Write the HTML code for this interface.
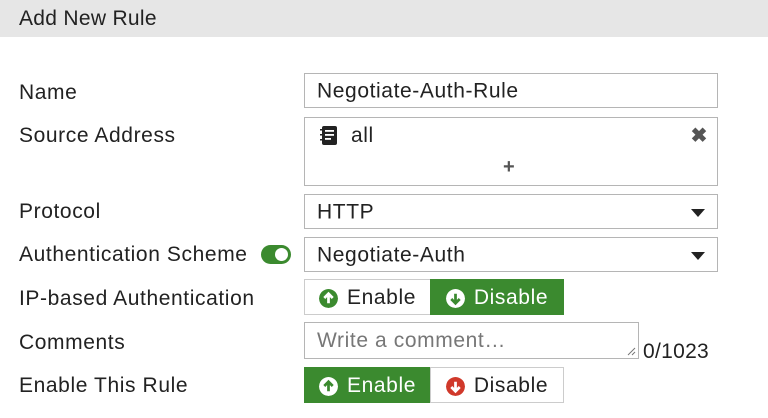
<!DOCTYPE html>
<html><head><style>
body{margin:0;width:768px;height:418px;background:#fff;font-family:"Liberation Sans",sans-serif;color:#222;position:relative;overflow:hidden;letter-spacing:0.6px}
.a{position:absolute}
.hdr{left:0;top:0;width:768px;height:37px;background:#e6e6e6}
.lbl{left:19px;font-size:21px;line-height:24px}
.box{border:1px solid #b5b5b5;box-sizing:border-box;font-size:21px;background:#fff}
.txt{position:absolute;left:12px;top:50%;transform:translateY(-48%)}
.caret{position:absolute;right:12px;top:50%;margin-top:-3px;width:0;height:0;border-left:7px solid transparent;border-right:7px solid transparent;border-top:8px solid #222}
.btn{position:absolute;box-sizing:border-box;border:1px solid #ccc;font-size:21px;display:flex;align-items:center;justify-content:center;gap:9px;padding-top:2px}
.on{background:#3b8a2f;color:#fff;border-color:#3b8a2f}
.ic{width:19px;height:19px;border-radius:50%;display:inline-block}
</style></head><body>
<div class="a hdr"></div>
<div class="a" style="left:19px;top:7px;font-size:21px;color:#222;letter-spacing:0.3px">Add New Rule</div>

<div class="a lbl" style="top:81px">Name</div>
<div class="a lbl" style="top:124px">Source Address</div>
<div class="a lbl" style="top:200px">Protocol</div>
<div class="a lbl" style="top:243px">Authentication Scheme</div>
<div class="a" style="left:261px;top:245px;width:30px;height:19px;border-radius:10px;background:#3b8a2f"><div style="position:absolute;right:3px;top:3px;width:13px;height:13px;border-radius:50%;background:#fff"></div></div>
<div class="a lbl" style="top:287px">IP-based Authentication</div>
<div class="a lbl" style="top:331px">Comments</div>
<div class="a lbl" style="top:374px">Enable This Rule</div>

<div class="a box" style="left:304px;top:73px;width:414px;height:35px"><span class="txt">Negotiate-Auth-Rule</span></div>

<div class="a box" style="left:304px;top:117px;width:414px;height:69px">
 <svg class="a" style="left:15px;top:8px" width="17" height="19" viewBox="0 0 17 19"><rect x="2" y="0" width="15" height="19" rx="2" fill="#222"/><rect x="5" y="4" width="9" height="1.8" fill="#fff"/><rect x="5" y="8" width="9" height="1.8" fill="#fff"/><rect x="5" y="12" width="6" height="1.8" fill="#fff"/><rect x="0" y="3" width="3" height="1.5" fill="#222"/><rect x="0" y="8" width="3" height="1.5" fill="#222"/><rect x="0" y="13" width="3" height="1.5" fill="#222"/></svg>
 <span class="a" style="left:46px;top:6px">all</span>
 <span class="a" style="right:9px;top:5px;font-size:20px;color:#555;font-weight:bold">✖</span>
 <span class="a" style="left:198px;top:38px;font-size:20px;color:#555;font-weight:bold">+</span>
</div>

<div class="a box" style="left:304px;top:194px;width:414px;height:35px"><span class="txt">HTTP</span><div class="caret"></div></div>
<div class="a box" style="left:304px;top:237px;width:414px;height:35px"><span class="txt">Negotiate-Auth</span><div class="caret"></div></div>

<div class="btn" style="left:304px;top:279px;width:127px;height:36px"><svg class="ic" viewBox="0 0 18 18"><circle cx="9" cy="9" r="9" fill="#3b8a2f"/><path d="M9 13.5V5M5 8.5L9 4.5 13 8.5" stroke="#fff" stroke-width="2.6" fill="none"/></svg>Enable</div>
<div class="btn on" style="left:430px;top:279px;width:134px;height:36px"><svg class="ic" viewBox="0 0 18 18"><circle cx="9" cy="9" r="9" fill="#fff"/><path d="M9 4.5V13M5 9.5L9 13.5 13 9.5" stroke="#3b8a2f" stroke-width="2.6" fill="none"/></svg>Disable</div>

<div class="a box" style="left:304px;top:322px;width:335px;height:37px;color:#777"><span class="a" style="left:12px;top:6px">Write a comment…</span>
<svg class="a" style="right:2px;bottom:2px" width="9" height="9"><path d="M1 8L8 1M5 8L8 5" stroke="#777" stroke-width="1"/></svg></div>
<div class="a" style="left:643px;top:340px;font-size:21px;letter-spacing:0.3px">0/1023</div>

<div class="btn on" style="left:304px;top:367px;width:127px;height:36px"><svg class="ic" viewBox="0 0 18 18"><circle cx="9" cy="9" r="9" fill="#fff"/><path d="M9 13.5V5M5 8.5L9 4.5 13 8.5" stroke="#3b8a2f" stroke-width="2.6" fill="none"/></svg>Enable</div>
<div class="btn" style="left:430px;top:367px;width:134px;height:36px"><svg class="ic" viewBox="0 0 18 18"><circle cx="9" cy="9" r="9" fill="#d0392b"/><path d="M9 4.5V13M5 9.5L9 13.5 13 9.5" stroke="#fff" stroke-width="2.6" fill="none"/></svg>Disable</div>
</body></html>
